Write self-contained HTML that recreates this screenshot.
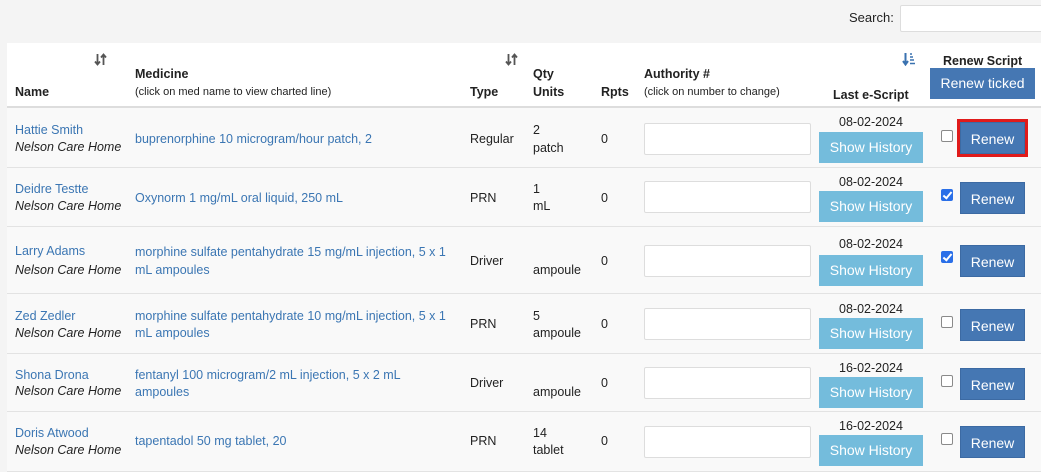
<!DOCTYPE html>
<html><head><meta charset="utf-8"><style>
*{margin:0;padding:0;box-sizing:border-box}
body{width:1041px;height:472px;background:#f4f4f4;font-family:"Liberation Sans",Arial,sans-serif;font-size:12.5px;color:#222;position:relative;overflow:hidden}
.a{position:absolute;line-height:16px;white-space:nowrap}
.b{font-weight:bold}
.l{color:#3b76b3}
.i{font-style:italic}
.row{position:absolute;left:7px;width:1034px;background:#f9f9f9;border-bottom:1px solid #e3e3e3}
.inp{position:absolute;left:644px;width:167px;height:32px;background:#fff;border:1px solid #ddd;border-radius:2px}
.sh{position:absolute;left:819px;width:104px;height:31px;background:#74bcdc;color:#fff;font-size:14px;line-height:31px;text-align:center}
.rn{position:absolute;left:960px;width:65px;height:32px;background:#4577b3;color:#fff;font-size:14px;line-height:32px;text-align:center;border:1px solid #3c6aa3}
.cb{position:absolute;left:941px;width:12px;height:12px;border:1px solid #8a8a8a;border-radius:2px;background:#fff}
.cb.on{background:#2a6fe8;border-color:#2a6fe8}
.cb.on:after{content:"";position:absolute;left:3px;top:0px;width:3px;height:7px;border:solid #fff;border-width:0 2px 2px 0;transform:rotate(40deg)}
.dt{position:absolute;left:819px;width:104px;text-align:center;line-height:16px}
</style></head><body>
<div class="a" style="left:849px;top:10px;font-size:13px">Search:</div>
<div style="position:absolute;left:900px;top:5px;width:145px;height:27px;background:#fff;border:1px solid #ddd;border-radius:2px"></div>

<div style="position:absolute;left:7px;top:43px;width:1034px;height:65px;background:#fff;border-bottom:2px solid #ddd"></div>
<svg style="position:absolute;left:94px;top:53px" width="13" height="13" viewBox="0 0 13 13"><path d="M3.5 1v10M1 8.5l2.5 3 2.5-3M9.5 12V2M7 4.5l2.5-3 2.5 3" stroke="#555" stroke-width="1.8" fill="none"/></svg>
<svg style="position:absolute;left:505px;top:53px" width="13" height="13" viewBox="0 0 13 13"><path d="M3.5 1v10M1 8.5l2.5 3 2.5-3M9.5 12V2M7 4.5l2.5-3 2.5 3" stroke="#555" stroke-width="1.8" fill="none"/></svg>
<svg style="position:absolute;left:902px;top:52px" width="14" height="14" viewBox="0 0 14 14"><path d="M3.5 1v11M1 9l2.5 3.5 2.5-3.5" stroke="#3a72b0" stroke-width="2" fill="none"/><path d="M8 2h2M8 5h3M8 8h4M8 11.5h5" stroke="#3a72b0" stroke-width="1.6"/></svg>
<div class="a b" style="left:15px;top:84px">Name</div>
<div class="a b" style="left:135px;top:66px">Medicine</div>
<div class="a" style="left:135px;top:84px;font-size:11px">(click on med name to view charted line)</div>
<div class="a b" style="left:470px;top:84px">Type</div>
<div class="a b" style="left:533px;top:66px">Qty</div>
<div class="a b" style="left:533px;top:84px">Units</div>
<div class="a b" style="left:601px;top:84px">Rpts</div>
<div class="a b" style="left:644px;top:66px">Authority #</div>
<div class="a" style="left:644px;top:84px;font-size:11px">(click on number to change)</div>
<div class="a b" style="left:833px;top:87px">Last e-Script</div>
<div class="a b" style="left:943px;top:53px">Renew Script</div>
<div style="position:absolute;left:930px;top:68px;width:105px;height:31px;background:#4577b3;color:#fff;font-size:14px;line-height:31px;text-align:center">Renew ticked</div>

<!-- row1 -->
<div class="row" style="top:108px;height:60px"></div>
<div class="a l" style="left:15px;top:122px">Hattie Smith</div>
<div class="a i" style="left:15px;top:139px">Nelson Care Home</div>
<div class="a l" style="left:135px;top:131px">buprenorphine 10 microgram/hour patch, 2</div>
<div class="a" style="left:470px;top:131px">Regular</div>
<div class="a" style="left:533px;top:122px">2</div><div class="a" style="left:533px;top:140px">patch</div>
<div class="a" style="left:601px;top:131px">0</div>
<div class="inp" style="top:123px"></div>
<div class="dt" style="top:114px">08-02-2024</div>
<div class="sh" style="top:132px">Show History</div>
<div class="cb" style="top:130px"></div>
<div style="position:absolute;left:957px;top:119px;width:71px;height:38px;border:3px solid #e01b1b"></div>
<div class="rn" style="top:122px;left:960px;width:65px">Renew</div>

<!-- row2 -->
<div class="row" style="top:168px;height:59px"></div>
<div class="a l" style="left:15px;top:181px">Deidre Testte</div>
<div class="a i" style="left:15px;top:198px">Nelson Care Home</div>
<div class="a l" style="left:135px;top:190px">Oxynorm 1 mg/mL oral liquid, 250 mL</div>
<div class="a" style="left:470px;top:190px">PRN</div>
<div class="a" style="left:533px;top:181px">1</div><div class="a" style="left:533px;top:198px">mL</div>
<div class="a" style="left:601px;top:190px">0</div>
<div class="inp" style="top:181px"></div>
<div class="dt" style="top:174px">08-02-2024</div>
<div class="sh" style="top:191px">Show History</div>
<div class="cb on" style="top:189px"></div>
<div class="rn" style="top:182px">Renew</div>

<!-- row3 -->
<div class="row" style="top:227px;height:67px"></div>
<div class="a l" style="left:15px;top:243px">Larry Adams</div>
<div class="a i" style="left:15px;top:262px">Nelson Care Home</div>
<div class="a l" style="left:135px;top:244px">morphine sulfate pentahydrate 15 mg/mL injection, 5 x 1</div>
<div class="a l" style="left:135px;top:262px">mL ampoules</div>
<div class="a" style="left:470px;top:253px">Driver</div>
<div class="a" style="left:533px;top:262px">ampoule</div>
<div class="a" style="left:601px;top:253px">0</div>
<div class="inp" style="top:245px"></div>
<div class="dt" style="top:236px">08-02-2024</div>
<div class="sh" style="top:255px">Show History</div>
<div class="cb on" style="top:251px"></div>
<div class="rn" style="top:245px">Renew</div>

<!-- row4 -->
<div class="row" style="top:294px;height:60px"></div>
<div class="a l" style="left:15px;top:308px">Zed Zedler</div>
<div class="a i" style="left:15px;top:325px">Nelson Care Home</div>
<div class="a l" style="left:135px;top:308px">morphine sulfate pentahydrate 10 mg/mL injection, 5 x 1</div>
<div class="a l" style="left:135px;top:325px">mL ampoules</div>
<div class="a" style="left:470px;top:316px">PRN</div>
<div class="a" style="left:533px;top:308px">5</div><div class="a" style="left:533px;top:325px">ampoule</div>
<div class="a" style="left:601px;top:316px">0</div>
<div class="inp" style="top:308px"></div>
<div class="dt" style="top:301px">08-02-2024</div>
<div class="sh" style="top:318px">Show History</div>
<div class="cb" style="top:316px"></div>
<div class="rn" style="top:309px">Renew</div>

<!-- row5 -->
<div class="row" style="top:354px;height:58px"></div>
<div class="a l" style="left:15px;top:367px">Shona Drona</div>
<div class="a i" style="left:15px;top:383px">Nelson Care Home</div>
<div class="a l" style="left:135px;top:367px">fentanyl 100 microgram/2 mL injection, 5 x 2 mL</div>
<div class="a l" style="left:135px;top:384px">ampoules</div>
<div class="a" style="left:470px;top:375px">Driver</div>
<div class="a" style="left:533px;top:384px">ampoule</div>
<div class="a" style="left:601px;top:375px">0</div>
<div class="inp" style="top:367px"></div>
<div class="dt" style="top:360px">16-02-2024</div>
<div class="sh" style="top:377px">Show History</div>
<div class="cb" style="top:375px"></div>
<div class="rn" style="top:368px">Renew</div>

<!-- row6 -->
<div class="row" style="top:412px;height:60px"></div>
<div class="a l" style="left:15px;top:425px">Doris Atwood</div>
<div class="a i" style="left:15px;top:442px">Nelson Care Home</div>
<div class="a l" style="left:135px;top:433px">tapentadol 50 mg tablet, 20</div>
<div class="a" style="left:470px;top:433px">PRN</div>
<div class="a" style="left:533px;top:425px">14</div><div class="a" style="left:533px;top:442px">tablet</div>
<div class="a" style="left:601px;top:433px">0</div>
<div class="inp" style="top:426px"></div>
<div class="dt" style="top:418px">16-02-2024</div>
<div class="sh" style="top:435px">Show History</div>
<div class="cb" style="top:433px"></div>
<div class="rn" style="top:426px">Renew</div>
</body></html>
